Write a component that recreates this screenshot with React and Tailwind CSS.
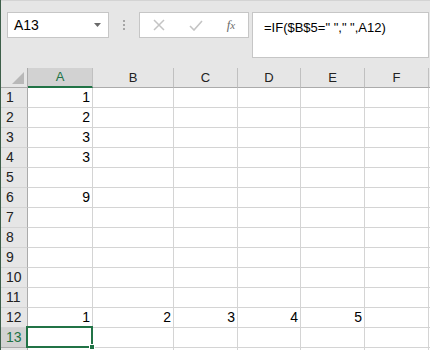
import React from 'react';

const cols = [
  { key: 'A', w: 'w-[65px]' },
  { key: 'B', w: 'w-[81px]' },
  { key: 'C', w: 'w-[64px]' },
  { key: 'D', w: 'w-[63px]' },
  { key: 'E', w: 'w-[64px]' },
  { key: 'F', w: 'w-[64px]' },
];

// values per row, keyed by column
const data = {
  1: { A: '1' },
  2: { A: '2' },
  3: { A: '3' },
  4: { A: '3' },
  6: { A: '9' },
  12: { A: '1', B: '2', C: '3', D: '4', E: '5' },
};

const rows = Array.from({ length: 14 }, (_, i) => i + 1);

function Toolbar() {
  return (
    <div className="flex h-[68px] items-start border-t border-[#d4d4d4] bg-[#e6e6e6] pt-[11px] pl-[6px]">
      {/* name box */}
      <div className="flex h-[26px] w-[102px] items-center justify-between border border-[#c6c6c6] bg-white pl-[6px] pr-[7px] font-['Liberation_Sans',sans-serif] text-[14px] text-black">
        <span>A13</span>
        <svg width="7" height="4" viewBox="0 0 7 4"><path d="M0 0h7L3.5 4z" fill="#6a6a6a" /></svg>
      </div>
      {/* grip dots */}
      <div className="flex h-[26px] w-[30px] flex-col items-center justify-center gap-[2px]">
        <div className="h-[2px] w-[2px] bg-[#a6a6a6]" />
        <div className="h-[2px] w-[2px] bg-[#a6a6a6]" />
        <div className="h-[2px] w-[2px] bg-[#a6a6a6]" />
      </div>
      {/* cancel / enter / fx */}
      <div className="flex h-[26px] w-[110px] items-center border border-[#c6c6c6] bg-white">
        <div className="flex w-[38px] justify-center">
          <svg width="12" height="12" viewBox="0 0 12 12"><path d="M1 1l10 10M11 1L1 11" stroke="#c4c4c4" strokeWidth="1.5" /></svg>
        </div>
        <div className="flex w-[36px] justify-center">
          <svg width="14" height="11" viewBox="0 0 14 11"><path d="M1 6l4 4 8-9" stroke="#c4c4c4" strokeWidth="1.6" fill="none" /></svg>
        </div>
        <div className="flex w-[34px] justify-center font-['Liberation_Serif',serif] text-[13px] italic text-[#6b6b6b]">
          <span>f<span className="text-[11px]">x</span></span>
        </div>
      </div>
      {/* formula */}
      <div className="ml-[3px] h-[46px] w-[177px] border border-[#c6c6c6] bg-white pl-[11px] pt-[5px] font-['Liberation_Sans',sans-serif] text-[13px] text-black">
        =IF($B$5=" "," ",A12)
      </div>
    </div>
  );
}

function HeaderRow() {
  return (
    <div className="flex h-[20px] font-['Liberation_Sans',sans-serif] text-[13px]">
      <div className="flex w-[27px] shrink-0 items-end justify-end border-r border-b border-[#ababab] bg-[#e6e6e6] pr-[3px] pb-[3px]">
        <svg width="12" height="12" viewBox="0 0 12 12"><path d="M12 0v12H0z" fill="#b8b8b8" /></svg>
      </div>
      {cols.map(c => (
        <div
          key={c.key}
          className={
            c.key === 'A'
              ? `${c.w} flex shrink-0 items-center justify-center border-r border-r-[#c0c0c0] border-b-2 border-b-[#217346] bg-[#d2d2d2] text-[#217346]`
              : `${c.w} flex shrink-0 items-center justify-center border-r border-r-[#c0c0c0] border-b border-b-[#ababab] bg-[#e6e6e6] text-[#222]`
          }
        >
          {c.key}
        </div>
      ))}
      <div className="flex-1 border-b border-[#ababab] bg-[#e6e6e6]" />
    </div>
  );
}

function Row({ n }) {
  const sel = n === 13;
  const label = n < 14 ? n : '';
  return (
    <div className="flex h-[20px] font-['Liberation_Sans',sans-serif] text-[14px]">
      <div
        className={
          sel
            ? 'flex w-[27px] shrink-0 items-center border-r-2 border-r-[#217346] border-b border-b-[#ababab] bg-[#d2d2d2] pl-[5px] text-[#217346]'
            : 'flex w-[27px] shrink-0 items-center border-r border-r-[#ababab] border-b border-b-[#d4d4d4] bg-[#e6e6e6] pl-[5px] text-[#222]'
        }
      >
        {label}
      </div>
      {cols.map(c => (
        <div
          key={c.key}
          className={`${c.w} flex shrink-0 items-center justify-end border-r border-b border-[#d4d4d4] bg-white pr-[2px] text-black`}
        >
          {data[n]?.[c.key] ?? ''}
        </div>
      ))}
      <div className="flex-1 border-b border-[#d4d4d4] bg-white" />
    </div>
  );
}

export default function App() {
  return (
    <div className="relative h-[350px] w-[430px] overflow-hidden border-l border-[#3e5f4a] bg-[#e6e6e6]">
      <Toolbar />
      <HeaderRow />
      {rows.map(n => <Row key={n} n={n} />)}
      {/* active cell A13 */}
      <div className="pointer-events-none absolute left-[25px] top-[326px] h-[22px] w-[67px] border-2 border-[#217346]" />
      <div className="absolute left-[88px] top-[344px] h-[6px] w-[6px] border border-white bg-[#217346]" />
    </div>
  );
}
